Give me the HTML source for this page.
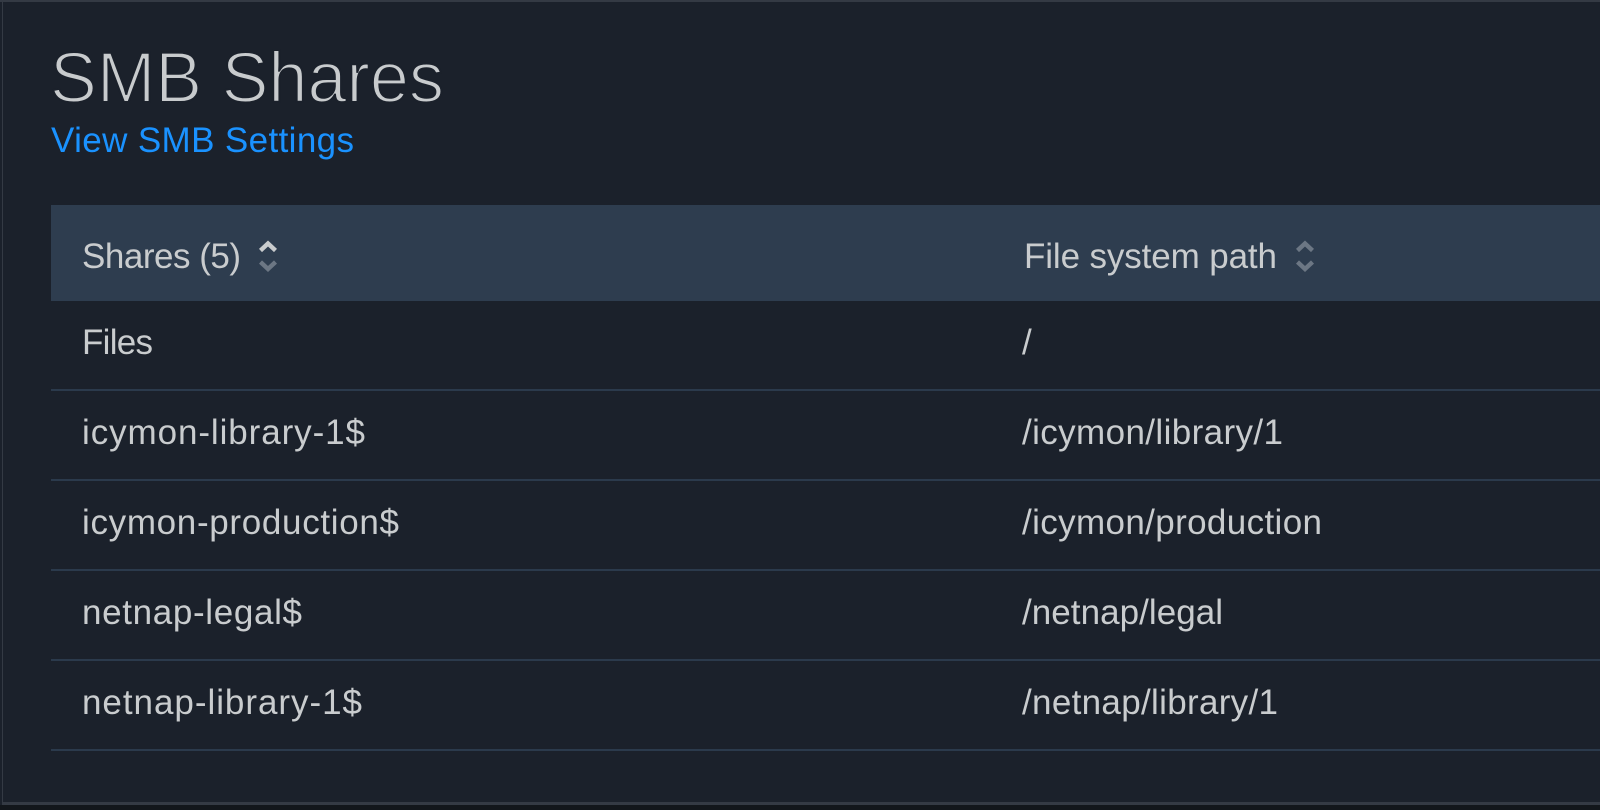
<!DOCTYPE html>
<html><head><meta charset="utf-8"><title>SMB Shares</title>
<style>
html,body{margin:0;padding:0;width:1600px;height:810px;overflow:hidden;background:#12161b}
svg{display:block}
text{font-family:"Liberation Sans",sans-serif;fill:#c9ccce;font-size:35px}
.c{fill:none;stroke-width:4.4}
</style></head><body>
<svg width="1600" height="810" viewBox="0 0 1600 810" xmlns="http://www.w3.org/2000/svg">
<rect x="0" y="0" width="1600" height="805" fill="#343a44"/>
<rect x="0" y="2" width="2" height="803" fill="#1b212b"/>
<rect x="3" y="2" width="1597" height="800" fill="#1b212b"/>
<rect x="51" y="205" width="1549" height="96" fill="#2e3d4f"/>
<g fill="#2b3a4c">
<rect x="51" y="389" width="1549" height="2"/><rect x="51" y="479" width="1549" height="2"/><rect x="51" y="569" width="1549" height="2"/><rect x="51" y="659" width="1549" height="2"/><rect x="51" y="749" width="1549" height="2"/>
</g>
<text x="50" y="102" textLength="394" lengthAdjust="spacingAndGlyphs" style="font-size:71px;fill:#c8cbcd;stroke:#1b212b;stroke-width:2px">SMB Shares</text>
<text x="51" y="152" textLength="303" style="fill:#1a92ff;font-size:35px">View SMB Settings</text>
<text x="82" y="268" textLength="159">Shares (5)</text>
<text x="1024" y="268" textLength="253">File system path</text>
<text x="82" y="354" textLength="71">Files</text>
<text x="82" y="444" textLength="283">icymon-library-1$</text>
<text x="82" y="534" textLength="317">icymon-production$</text>
<text x="82" y="624" textLength="220">netnap-legal$</text>
<text x="82" y="714" textLength="280">netnap-library-1$</text>
<text x="1022" y="354" textLength="12">/</text>
<text x="1022" y="444" textLength="261">/icymon/library/1</text>
<text x="1022" y="534" textLength="300">/icymon/production</text>
<text x="1022" y="624" textLength="201">/netnap/legal</text>
<text x="1022" y="714" textLength="256">/netnap/library/1</text>
<path class="c" stroke="#c9ccce" d="M260.5 250.5l7.5-7 7.5 7"/>
<path class="c" stroke="#6c7784" d="M260.5 262l7.5 7 7.5-7"/>
<path class="c" stroke="#6c7784" d="M1297.5 250.5l7.5-7 7.5 7"/>
<path class="c" stroke="#6c7784" d="M1297.5 262l7.5 7 7.5-7"/>
</svg>
</body></html>
